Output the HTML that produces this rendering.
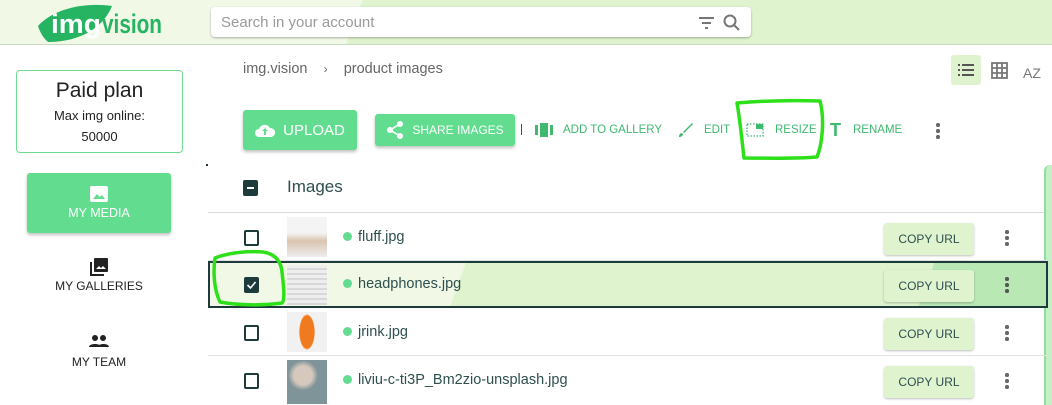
<!DOCTYPE html>
<html><head><meta charset="utf-8"><style>
*{box-sizing:border-box;margin:0;padding:0}
body{width:1052px;height:402px;overflow:hidden;background:#fff;font-family:"Liberation Sans",sans-serif;position:relative;color:#333}
.abs{position:absolute}
.hdr{left:0;top:0;width:1052px;height:45px;background:linear-gradient(110deg,#f1f9e6 0,#f1f9e6 340px,#dff3cf 341px);border-bottom:1px solid #c9dcc0}
.search{left:211px;top:7px;width:540px;height:30px;background:#fff;border-radius:4px;box-shadow:0 1px 2px rgba(0,0,0,.3);font-size:15px;color:#9a9a9a;padding:7px 10px}
.plan{left:16px;top:70px;width:167px;height:83px;border:1px solid #6fdc8f;border-radius:4px;text-align:center;color:#222}
.nav{text-align:center;font-size:12px;color:#222;width:144px;left:27px}
.btn{background:#62dd8f;color:#fff;border-radius:3px;box-shadow:0 2px 3px rgba(0,0,0,.25);font-size:15px;display:flex;align-items:center;justify-content:center;gap:8px}
.tool{font-size:11.5px;color:#3fb870;display:flex;align-items:center;gap:10px;top:120px;height:20px}
.row{left:208px;width:840px;height:48px;border-bottom:1px solid #e2e2e2}
.cb{position:absolute;left:36px;width:15px;height:16px;border:2px solid #1d3b3b;border-radius:2px;top:17px}
.th{position:absolute;left:79px;top:4px;width:40px;height:40px}
.fn{position:absolute;left:135px;top:16px;font-size:14.5px;color:#2f4f4f}
.fn:before{content:"";display:inline-block;width:9px;height:9px;border-radius:50%;background:#62dd8f;margin-right:6px}
.cu{position:absolute;left:676px;top:10px;width:90px;height:32px;background:#dff3cf;border-radius:3px;box-shadow:0 1px 2px rgba(0,0,0,.25);font-size:12px;color:#2f4f4f;text-align:center;line-height:32px}
.dots{position:absolute;left:797px;top:17px;width:4px}
.dots i{display:block;width:3.5px;height:3.5px;border-radius:50%;background:#666;margin-bottom:2.5px}
</style></head><body>
<div class="abs hdr"></div>
<svg class="abs" style="left:36px;top:0" width="135" height="45" viewBox="0 0 135 45">
<path d="M2 26 C18 8 50 2 76 6 C68 26 46 42 12 42 C7 38 4 32 2 26Z" fill="#26b463"/>
<text x="15" y="33" font-family="Liberation Sans" font-weight="bold" font-size="27" fill="#fff" textLength="50" lengthAdjust="spacingAndGlyphs">img</text>
<text x="66" y="33" font-family="Liberation Sans" font-weight="bold" font-size="27" fill="#26b463" textLength="60" lengthAdjust="spacingAndGlyphs">vision</text>
</svg>
<div class="abs search">Search in your account</div>
<svg class="abs" style="left:696px;top:13px" width="50" height="20"><g stroke="#777" stroke-width="2" fill="none"><path d="M3 5h15M6 10h9M9 15h3"/><circle cx="34" cy="8" r="5.5"/><path d="M38 12l5 5"/></g></svg>

<div class="abs plan"><div style="font-size:21px;margin-top:8px">Paid plan</div><div style="font-size:13px;margin-top:2px;line-height:21px">Max img online:<br>50000</div></div>
<div class="abs btn" style="left:27px;top:173px;width:144px;height:60px;flex-direction:column;gap:4px;font-size:12.5px">
<svg width="18" height="16"><rect width="18" height="16" rx="2" fill="#fff"/><path d="M3 13l4-5 3 3 2-2 3 4z" fill="#62dd8f"/></svg>MY MEDIA</div>
<div class="abs nav" style="top:258px"><svg width="18" height="18"><rect x="4" y="0" width="14" height="14" rx="1" fill="#222"/><path d="M1 4v13h13" stroke="#222" stroke-width="2" fill="none"/><path d="M6 11l3-3 2 2 2-2 3 3z" fill="#fff"/></svg><div>MY GALLERIES</div></div>
<div class="abs nav" style="top:334px"><svg width="20" height="14"><circle cx="6" cy="4" r="3" fill="#222"/><circle cx="14" cy="4" r="3" fill="#222"/><path d="M0 13c0-4 12-4 12 0zM9 13c0-4 11-4 11 0z" fill="#222"/></svg><div style="margin-top:4px">MY TEAM</div></div>

<div class="abs" style="left:243px;top:61px;font-size:14.5px;color:#666">img.vision &nbsp;&nbsp;&nbsp;<span style="font-size:12px">›</span>&nbsp;&nbsp;&nbsp; product images</div>
<div class="abs" style="left:951px;top:55px;width:30px;height:30px;background:#dff3cf;border-radius:3px"></div>
<svg class="abs" style="left:956px;top:60px" width="90" height="22"><g fill="#555"><rect x="2" y="4" width="2" height="2"/><rect x="2" y="9" width="2" height="2"/><rect x="2" y="14" width="2" height="2"/><rect x="6" y="4" width="12" height="2"/><rect x="6" y="9" width="12" height="2"/><rect x="6" y="14" width="12" height="2"/></g><g stroke="#777" stroke-width="1.8" fill="none"><rect x="36" y="3" width="15" height="15"/><path d="M41 3v15M46 3v15M36 8h15M36 13h15"/></g><text x="67" y="18" font-family="Liberation Sans" font-size="14" fill="#777">AZ</text></svg>

<div class="abs btn" style="left:243px;top:110px;width:114px;height:40px"><svg width="20" height="14"><path d="M4 14a4 4 0 010-8 6 6 0 0111-1 4.5 4.5 0 011 9z" fill="#fff"/><path d="M10 5l-3 3h2v4h2V8h2z" fill="#62dd8f"/></svg>UPLOAD</div>
<div class="abs btn" style="left:375px;top:114px;width:140px;height:32px;font-size:12px"><svg width="18" height="18"><g fill="#fff"><circle cx="14" cy="3" r="3"/><circle cx="4" cy="9" r="3"/><circle cx="14" cy="15" r="3"/></g><path d="M14 3L4 9l10 6" stroke="#fff" stroke-width="1.6" fill="none"/></svg>SHARE IMAGES</div>
<div class="abs" style="left:521px;top:124px;width:1px;height:11px;background:#8b2a4a"></div>
<div class="abs tool" style="left:535px"><svg width="18" height="14"><g fill="#3fb870"><rect x="0" y="2" width="3" height="10"/><rect x="5" y="0" width="8" height="14"/><rect x="15" y="2" width="3" height="10"/></g></svg>ADD TO GALLERY</div>
<div class="abs tool" style="left:678px"><svg width="16" height="16"><path d="M14 1L5 10l1 1 9-9zM4 11c-2 0-3 2-3 4 2 0 4-1 4-3z" fill="#3fb870"/></svg>EDIT</div>
<div class="abs tool" style="left:746px;gap:11px"><svg width="18" height="14"><rect x="1" y="1" width="16" height="12" fill="none" stroke="#3fb870" stroke-width="1.3" stroke-dasharray="1.5 1.5"/><rect x="10" y="1" width="7" height="5" fill="#3fb870"/></svg>RESIZE</div>
<div class="abs tool" style="left:830px;gap:12px"><span style="font-weight:bold;font-size:18px;color:#3fb870">T</span>RENAME</div>
<div class="abs dots" style="left:936px;top:123px"><i></i><i></i><i></i></div>

<div class="abs" style="left:206px;top:164px;width:2px;height:2px;background:#1d3b3b"></div>
<div class="abs" style="left:1044px;top:165px;width:10px;height:240px;background:#c6efc6;border-left:2px solid #8fe0a0;border-radius:6px 0 0 0"></div>
<div class="abs" style="left:208px;top:164px;width:836px;height:49px;border-bottom:1px solid #dcdcdc">
<div class="abs" style="left:35px;top:16px;width:15px;height:16px;background:#1d3b3b;border-radius:2px"><div style="margin:7px 4px;width:7px;height:2px;background:#fff"></div></div>
<div class="abs" style="left:79px;top:13px;font-size:17px;color:#2f4f4f">Images</div></div>

<div class="abs row" style="top:213px"><div class="cb"></div><div class="th" style="background:linear-gradient(#f4f4f4 40%,#d9c4b0 60%,#eee)"></div><div class="fn">fluff.jpg</div><div class="cu">COPY URL</div><div class="dots"><i></i><i></i><i></i></div></div>
<div class="abs row" style="top:261px;height:47px;border:2px solid #1d3b3b;background:linear-gradient(110deg,#f1f9e6 0,#f1f9e6 240px,#dff3cf 241px,#dff3cf 680px,#b9e8b4 681px)"><div class="cb" style="left:34px;top:14px;background:#1d3b3b"><svg width="11" height="12" style="position:absolute;left:0;top:0"><path d="M1.5 6l3 3 5-6" stroke="#fff" stroke-width="1.6" fill="none"/></svg></div><div class="th" style="left:77px;top:2px;background:repeating-linear-gradient(#eee 0,#eee 3px,#d8d8d8 3px,#d8d8d8 5px)"></div><div class="fn" style="left:133px;top:13px">headphones.jpg</div><div class="cu" style="left:674px;top:7px">COPY URL</div><div class="dots" style="left:795px;top:14px"><i style="background:#555"></i><i style="background:#555"></i><i style="background:#555"></i></div></div>
<div class="abs row" style="top:308px"><div class="cb"></div><div class="th" style="background:radial-gradient(ellipse 8px 18px,#f07a1e 90%,#f1f1f1 100%)"></div><div class="fn">jrink.jpg</div><div class="cu">COPY URL</div><div class="dots"><i></i><i></i><i></i></div></div>
<div class="abs row" style="top:356px;border:none"><div class="cb"></div><div class="th" style="height:44px;background:radial-gradient(circle at 40% 35%,#d6c8bd 25%,#7f9499 40%)"></div><div class="fn">liviu-c-ti3P_Bm2zio-unsplash.jpg</div><div class="cu">COPY URL</div><div class="dots"><i></i><i></i><i></i></div></div>

<svg class="abs" style="left:0;top:0" width="1052" height="402"><g fill="none" stroke="#2ee01a" stroke-width="3.5" stroke-linejoin="round" stroke-linecap="round">
<path d="M737 103 C760 101 790 100 820 101 C825 120 822 145 817 157 C795 159 765 158 744 158 C742 140 740 120 737 103Z"/>
<path d="M215 258 C230 252 250 251 263 252 C276 254 281 262 282 272 C284 290 285 300 282 303 C260 306 236 305 220 302 C214 290 213 272 215 258Z"/>
</g></svg>
</body></html>
